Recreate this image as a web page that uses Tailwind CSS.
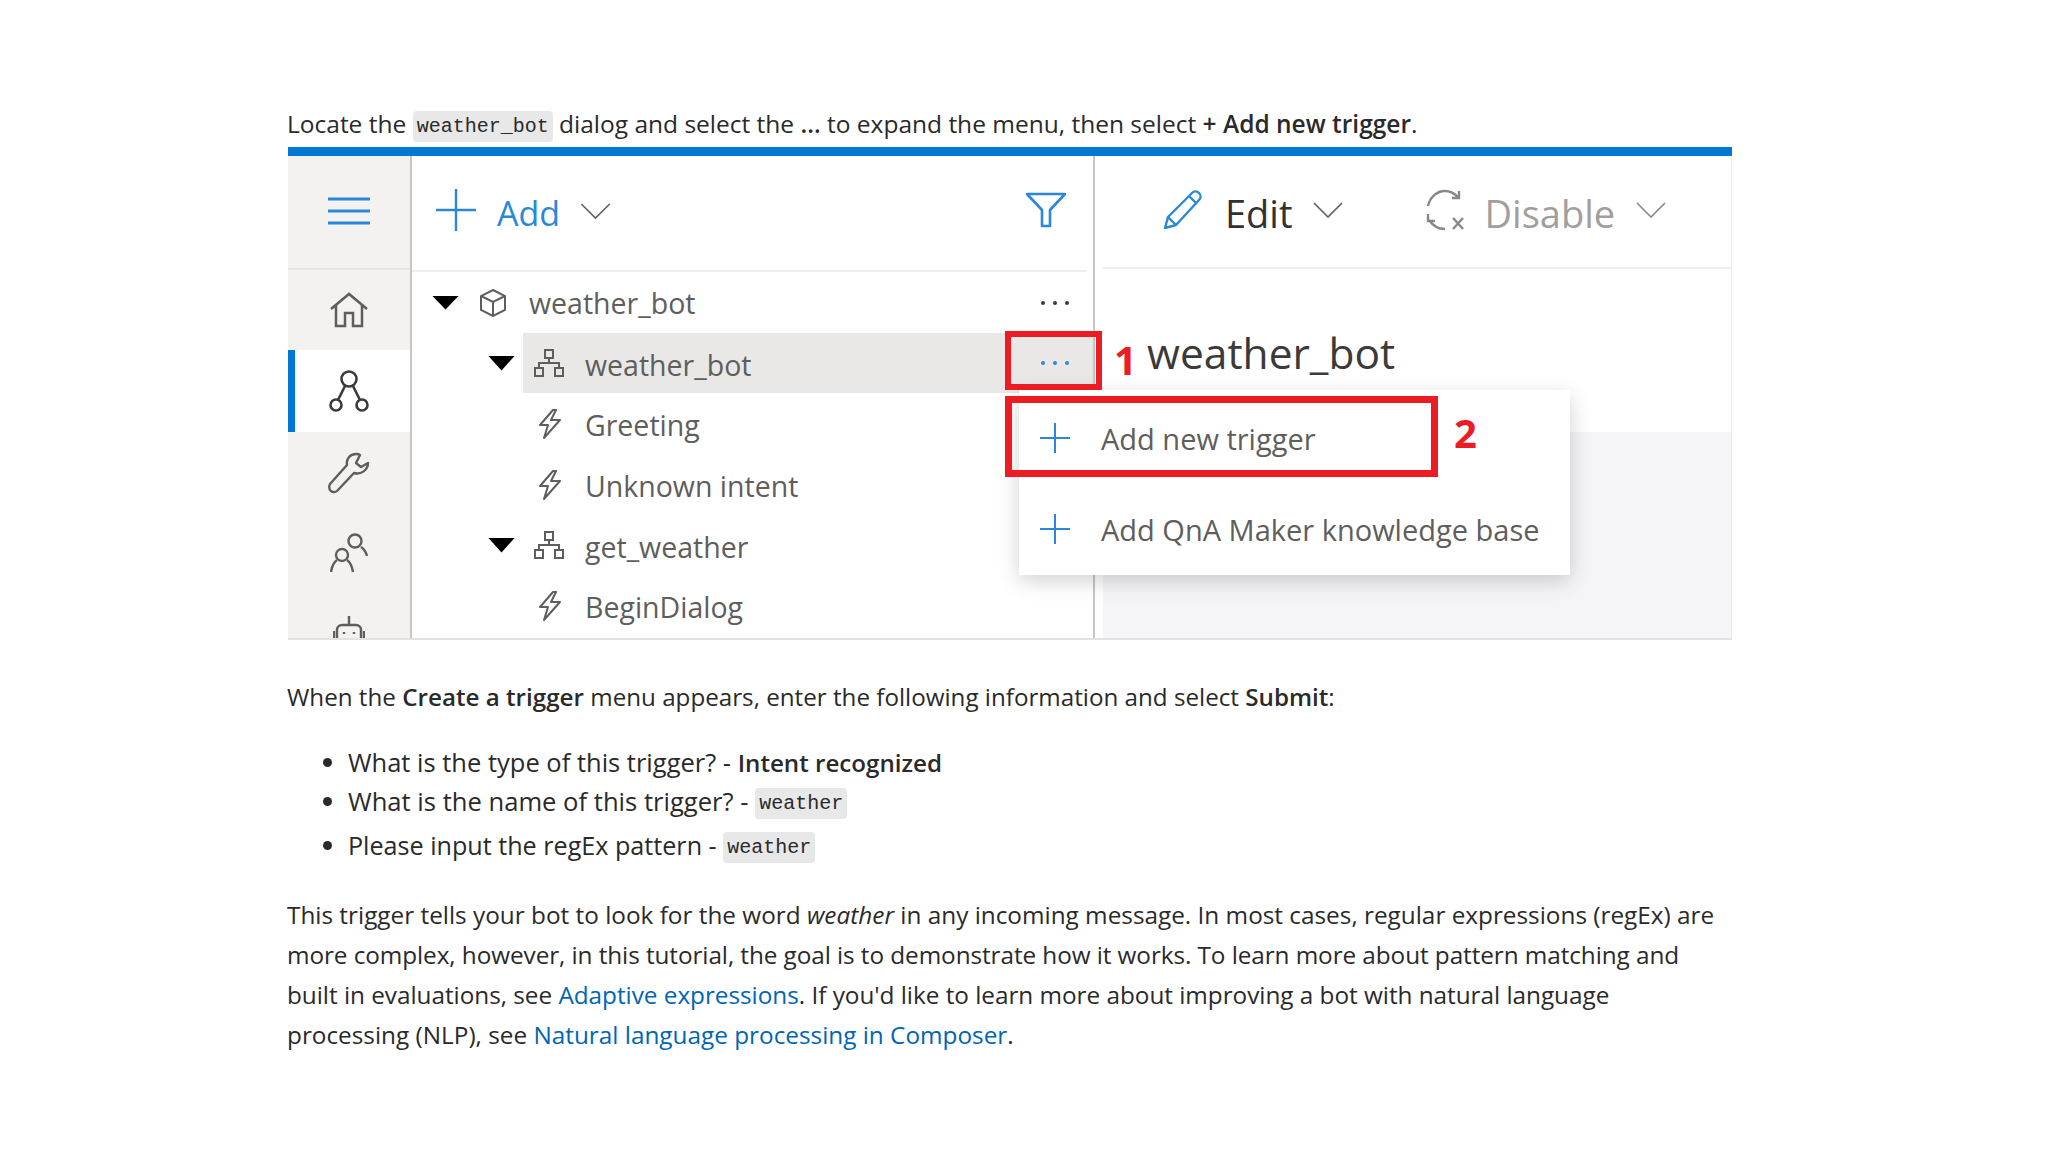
<!DOCTYPE html>
<html lang="en">
<head>
  <meta charset="UTF-8" />
  <title>Add a trigger</title>
  <script src="https://cdn.jsdelivr.net/npm/@tailwindcss/browser@4"></script>
</head>
<body class="bg-white w-[2048px] h-[1152px] overflow-hidden font-['Open_Sans',sans-serif] text-[#2a2a2a] text-[24px] leading-[40px]">
  <main class="pl-[287px] pt-[104px] w-[1740px]">

    <p class="h-[40px] whitespace-nowrap text-[24.5px]">Locate the <code class="font-['Liberation_Mono',monospace] text-[20px] bg-[#e8e8e8] rounded-[4px] px-[4px] py-[4px] align-[1px]">weather_bot</code> dialog and select the <b class="font-semibold">...</b> to expand the menu, then select <b class="font-semibold">+ Add new trigger</b>.</p>

    <!-- Composer screenshot -->
    <div class="relative mt-[3px] ml-[1px] w-[1444px] h-[493px] flex flex-col leading-none">
      <div class="h-[9px] shrink-0 bg-[#0078d4]"></div>
      <div class="flex flex-1 min-h-0 border-b-2 border-[#e4e2e0] overflow-hidden">

        <!-- Sidebar -->
        <div class="w-[124px] bg-[#f3f2f1] border-r-2 border-[#c8c6c4] flex flex-col shrink-0">
          <div class="h-[114px] shrink-0 border-b-2 border-[#e8e6e4] flex items-center justify-center pb-[2px]">
            <svg width="44" height="28" viewBox="0 0 44 28" stroke="#2b88d8" stroke-width="3"><path d="M1 2h42M1 14h42M1 26h42"/></svg>
          </div>
          <div class="h-[80px] shrink-0 flex items-center justify-center">
            <svg width="38" height="36" viewBox="0 0 38 36" fill="none" stroke="#5f5e5c" stroke-width="2.5"><path d="M1 17 19 2l18 15M6 13v21h9V21h8v13h9V13"/></svg>
          </div>
          <div class="h-[82px] shrink-0 flex items-center justify-center bg-white border-l-[7px] border-[#0078d4] pr-[7px]">
            <svg width="40" height="43" viewBox="0 0 40 43" fill="none" stroke="#3b3a39" stroke-width="2.6"><circle cx="20" cy="9" r="7.5"/><circle cx="7" cy="35" r="5.5"/><circle cx="33" cy="35" r="5.5"/><path d="m16 16-7 14M24 16l7 14"/></svg>
          </div>
          <div class="h-[81px] shrink-0 flex items-center justify-center">
            <svg width="42" height="42" viewBox="0 0 42 42" fill="none" stroke="#5f5e5c" stroke-width="2.4" stroke-linejoin="round"><path d="M28 2c-6 0-10 5-9 11L2 32c-1 2-1 4 0 6s5 3 7 1l17-18c7 2 14-3 14-10l-7 4-5-4 4-8c-1-1-2-1-4-1Z"/></svg>
          </div>
          <div class="h-[80px] shrink-0 flex items-center justify-center">
            <svg width="38" height="40" viewBox="0 0 38 40" fill="none" stroke="#5f5e5c" stroke-width="2.4"><circle cx="25" cy="8" r="6.5"/><path d="M31 14c3 2 5 5 6 9"/><circle cx="12" cy="22" r="6"/><path d="M7 27c-3 2-5 6-6 12M17 27c3 2 5 6 6 12"/></svg>
          </div>
          <div class="flex justify-center pt-[23px]">
            <svg width="32" height="32" viewBox="0 0 32 32" fill="none" stroke="#5f5e5c" stroke-width="2.4"><path d="M16 0v9"/><rect x="4" y="9" width="24" height="18" rx="5"/><path d="M1 15v7M31 15v7M11 16v2M21 16v2"/></svg>
          </div>
        </div>

        <!-- Tree -->
        <div class="w-[683px] border-r-2 border-[#c8c6c4] shrink-0 text-[#605e5c] text-[28.5px]">
          <div class="h-[116px] mr-[6px] border-b-2 border-[#eeedec] flex items-center pl-[24px] pr-[20px] pb-[6px] text-[#2b88d8]">
            <svg width="40" height="42" viewBox="0 0 40 42" stroke="#2b88d8" stroke-width="2.4"><path d="M20 0v42M0 21h40"/></svg>
            <span class="ml-[21px] pt-[6px] text-[34px]">Add</span>
            <svg class="ml-[20px] mt-[2px]" width="31" height="17" viewBox="0 0 32 18" fill="none" stroke="#605e5c" stroke-width="1.6"><path d="m1 1 15 15L31 1"/></svg>
            <svg class="ml-auto" width="42" height="36" viewBox="0 0 42 36" fill="none" stroke="#2b88d8" stroke-width="2.6" stroke-linejoin="round"><path d="M2 2h38L25 18v16h-8V18Z"/></svg>
          </div>

          <div class="h-[61px] flex items-center pl-[20px] pr-[24px]">
            <div class="w-[27px] h-[14px] bg-black [clip-path:polygon(0_0,100%_0,50%_100%)] mr-[21px]"></div>
            <svg width="26" height="28" viewBox="0 0 26 28" fill="none" stroke="#5f5e5c" stroke-width="2"><path d="M13 1 25 7v14l-12 6-12-6V7ZM1 7l12 6 12-6M13 13v14"/></svg>
            <span class="ml-[23px] pt-[2px]">weather_bot</span>
            <div class="ml-auto flex gap-[8px]">
              <i class="size-[4px] rounded-full bg-[#3b3a39]"></i><i class="size-[4px] rounded-full bg-[#3b3a39]"></i><i class="size-[4px] rounded-full bg-[#3b3a39]"></i>
            </div>
          </div>

          <div class="h-[60px] flex items-center pl-[76px]">
            <div class="w-[27px] h-[15px] bg-black [clip-path:polygon(0_0,100%_0,50%_100%)] mr-[8px]"></div>
            <div class="flex-1 h-full bg-[#e9e8e7] flex items-center pl-[11px] pr-[24px]">
              <svg width="30" height="28" viewBox="0 0 30 28" fill="none" stroke="#5f5e5c" stroke-width="2"><rect x="11" y="1" width="8" height="8"/><rect x="1" y="19" width="8" height="8"/><rect x="21" y="19" width="8" height="8"/><path d="M15 9v5M5 19v-5h20v5"/></svg>
              <span class="ml-[21px] pt-[4px]">weather_bot</span>
              <div class="ml-auto flex gap-[8px]">
                <i class="size-[4px] rounded-full bg-[#2b88d8]"></i><i class="size-[4px] rounded-full bg-[#2b88d8]"></i><i class="size-[4px] rounded-full bg-[#2b88d8]"></i>
              </div>
            </div>
          </div>

          <div class="h-[61px] flex items-center pl-[126px]">
            <svg width="24" height="30" viewBox="0 0 24 30" fill="none" stroke="#5f5e5c" stroke-width="2" stroke-linejoin="round"><path d="M15 1 2 16h8L6 29l16-18h-9l5-10Z"/></svg>
            <span class="ml-[23px] pt-[4px]">Greeting</span>
          </div>
          <div class="h-[61px] flex items-center pl-[126px]">
            <svg width="24" height="30" viewBox="0 0 24 30" fill="none" stroke="#5f5e5c" stroke-width="2" stroke-linejoin="round"><path d="M15 1 2 16h8L6 29l16-18h-9l5-10Z"/></svg>
            <span class="ml-[23px] pt-[4px]">Unknown intent</span>
          </div>
          <div class="h-[60px] flex items-center pl-[76px]">
            <div class="w-[27px] h-[15px] bg-black [clip-path:polygon(0_0,100%_0,50%_100%)] mr-[19px]"></div>
            <svg width="30" height="28" viewBox="0 0 30 28" fill="none" stroke="#5f5e5c" stroke-width="2"><rect x="11" y="1" width="8" height="8"/><rect x="1" y="19" width="8" height="8"/><rect x="21" y="19" width="8" height="8"/><path d="M15 9v5M5 19v-5h20v5"/></svg>
            <span class="ml-[21px] pt-[4px]">get_weather</span>
          </div>
          <div class="h-[61px] flex items-center pl-[126px]">
            <svg width="24" height="30" viewBox="0 0 24 30" fill="none" stroke="#5f5e5c" stroke-width="2" stroke-linejoin="round"><path d="M15 1 2 16h8L6 29l16-18h-9l5-10Z"/></svg>
            <span class="ml-[23px] pt-[4px]">BeginDialog</span>
          </div>
        </div>

        <!-- Detail panel -->
        <div class="flex-1 flex flex-col min-w-0 border-r border-[#ecebea] pl-[8px]">
          <div class="h-[113px] shrink-0 border-b-2 border-[#eeedec] flex items-center pl-[60px] pb-[4px] text-[38px]">
            <svg width="40" height="40" viewBox="0 0 40 40" fill="none" stroke="#2b88d8" stroke-width="2.4" stroke-linejoin="round"><path d="M2 38 5 27 29 3c2-2 5-2 7 0s2 5 0 7L13 35ZM5 27l8 8M26 6l8 8"/></svg>
            <span class="ml-[22px] pt-[6px] text-[#323130]">Edit</span>
            <svg class="ml-[20px]" width="30" height="16" viewBox="0 0 30 16" fill="none" stroke="#605e5c" stroke-width="1.6"><path d="m1 1 14 14L29 1"/></svg>
            <svg class="ml-[80px]" width="44" height="42" viewBox="0 0 42 42" fill="none" stroke="#8a8886" stroke-width="2.4"><path d="M4 17C6 8 13 2 21 2c5 0 9 2 13 6M35 2v7h-7M4 25v7h7M5 31c4 6 9 9 16 9M29 29l10 11M39 29 29 40"/></svg>
            <span class="ml-[18px] pt-[6px] text-[#a19f9d]">Disable</span>
            <svg class="ml-[21px]" width="30" height="16" viewBox="0 0 30 16" fill="none" stroke="#8a8886" stroke-width="1.6"><path d="m1 1 14 14L29 1"/></svg>
          </div>
          <div class="h-[163px] shrink-0 pl-[44px] pt-[63px] text-[42.5px] text-[#3b3a39]">weather_bot</div>
          <div class="flex-1 bg-[#f5f4f6]"></div>
        </div>
      </div>

      <!-- Context menu -->
      <div class="absolute left-[731px] top-[243px] w-[551px] h-[185px] bg-white shadow-[0_6px_20px_rgba(0,0,0,0.18)] flex flex-col gap-[31px] pl-[21px] pt-[18px] text-[29px] text-[#605e5c]">
        <div class="h-[60px] flex items-center">
          <svg width="30" height="30" viewBox="0 0 30 30" stroke="#2b88d8" stroke-width="2"><path d="M15 0v30M0 15h30"/></svg>
          <span class="ml-[31px]">Add new trigger</span>
        </div>
        <div class="h-[60px] flex items-center">
          <svg width="30" height="30" viewBox="0 0 30 30" stroke="#2b88d8" stroke-width="2"><path d="M15 0v30M0 15h30"/></svg>
          <span class="ml-[31px]">Add QnA Maker knowledge base</span>
        </div>
      </div>

      <!-- Callouts -->
      <div class="absolute left-[717px] top-[184px] w-[97px] h-[59px] border-[6px] border-[#ec1c24]"></div>
      <div class="absolute left-[717px] top-[249px] w-[433px] h-[81px] border-[7px] border-[#ec1c24]"></div>
      <span class="absolute left-[826px] top-[193px] text-[40px] font-bold text-[#ec1c24]">1</span>
      <span class="absolute left-[1166px] top-[266px] text-[40px] font-bold text-[#ec1c24]">2</span>
    </div>

    <p class="mt-[37px] h-[40px] whitespace-nowrap text-[24.2px]">When the <b class="font-semibold">Create a trigger</b> menu appears, enter the following information and select <b class="font-semibold">Submit</b>:</p>

    <ul class="mt-[25px] pl-[61px] list-disc">
      <li class="h-[40px] text-[25.5px]">What is the type of this trigger? - <b class="font-semibold text-[24.15px]">Intent recognized</b></li>
      <li class="h-[40px] text-[25.6px]">What is the name of this trigger? - <code class="font-['Liberation_Mono',monospace] text-[20px] bg-[#e8e8e8] rounded-[4px] px-[4px] py-[4px] align-[2px]">weather</code></li>
      <li class="h-[40px] mt-[3px] text-[25.15px]">Please input the regEx pattern - <code class="font-['Liberation_Mono',monospace] text-[20px] bg-[#e8e8e8] rounded-[4px] px-[4px] py-[4px] align-[2px]">weather</code></li>
    </ul>

    <p class="mt-[30px] w-[1445px] text-[24.33px]">
      <span class="block">This trigger tells your bot to look for the word <i>weather</i> in any incoming message. In most cases, regular expressions (regEx) are</span>
      <span class="block tracking-[-0.08px]">more complex, however, in this tutorial, the goal is to demonstrate how it works. To learn more about pattern matching and</span>
      <span class="block tracking-[-0.03px]">built in evaluations, see <a class="text-[#0065b3]">Adaptive expressions</a>. If you'd like to learn more about improving a bot with natural language</span>
      <span class="block">processing (NLP), see <a class="text-[#0065b3]">Natural language processing in Composer</a>.</span>
    </p>
  </main>
</body>
</html>
